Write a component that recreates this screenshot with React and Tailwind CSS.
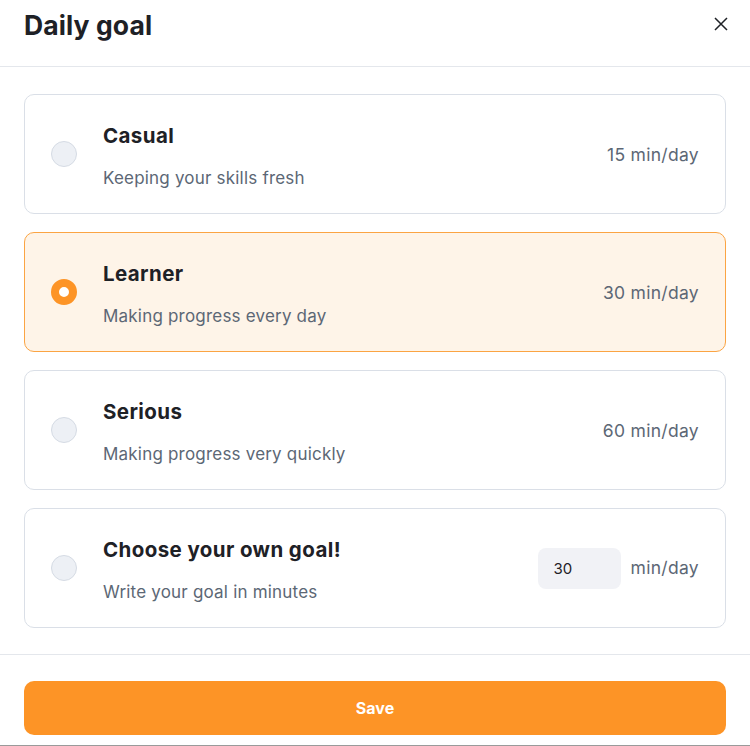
import React, { useState } from 'react';

const GOALS = [
  { id: 'casual', title: 'Casual', sub: 'Keeping your skills fresh', mins: 15 },
  { id: 'learner', title: 'Learner', sub: 'Making progress every day', mins: 30 },
  { id: 'serious', title: 'Serious', sub: 'Making progress very quickly', mins: 60 },
];

function Radio({ checked }) {
  return checked ? (
    <span className="w-[26px] h-[26px] shrink-0 rounded-full border-[8px] border-[#fd9426] bg-white" />
  ) : (
    <span className="w-[26px] h-[26px] shrink-0 rounded-full border border-[#d5dbe4] bg-[#edf0f5]" />
  );
}

export default function App() {
  const [selected, setSelected] = useState('learner');
  const [custom, setCustom] = useState('30');

  const card = (active) =>
    active
      ? 'border-[#fba443] bg-[#fef4e8]'
      : 'border-[#dadfe7] bg-white';

  return (
    <div
      className="w-[750px] h-[746px] bg-white flex flex-col border-b border-[#9a9a9a]"
      style={{ fontFamily: 'Inter, "Noto Sans", sans-serif' }}
    >
      {/* Header */}
      <div className="h-[67px] shrink-0 border-b border-[#e4e7ec] flex items-start justify-between pl-6 pr-[22px] pt-[7px]">
        <h1 className="text-[26.5px] font-bold text-[#1e2126] tracking-[0.1px] leading-9">Daily goal</h1>
        <button className="mt-[10px] text-[#1e2126]">
          <svg width="14" height="14" viewBox="0 0 14 14" fill="none" stroke="currentColor" strokeWidth="1.5">
            <path d="M1 1L13 13M13 1L1 13" />
          </svg>
        </button>
      </div>

      {/* Options */}
      <div className="flex flex-col gap-[18px] px-6 pt-[27px] pb-[26px] border-b border-[#e4e7ec]">
        {GOALS.map((g) => (
          <button
            key={g.id}
            onClick={() => setSelected(g.id)}
            className={`h-[120px] rounded-[10px] border flex items-center pl-[26px] pr-[26px] text-left ${card(selected === g.id)}`}
          >
            <Radio checked={selected === g.id} />
            <div className="ml-[26px] flex-1 flex flex-col gap-[18px] pt-[6px]">
              <span className="text-[20.5px] font-bold text-[#1e2126] leading-6 tracking-[0.4px]">{g.title}</span>
              <span className="text-[17px] text-[#5c6775] leading-6 tracking-[0.2px]">{g.sub}</span>
            </div>
            <span className="text-[17.5px] text-[#5c6775] tracking-[0.3px] pt-[2px]">{g.mins} min/day</span>
          </button>
        ))}

        <div
          onClick={() => setSelected('custom')}
          className={`h-[120px] rounded-[10px] border flex items-center pl-[26px] pr-[26px] ${card(selected === 'custom')}`}
        >
          <Radio checked={selected === 'custom'} />
          <div className="ml-[26px] flex-1 flex flex-col gap-[18px] pt-[6px]">
            <span className="text-[20.5px] font-bold text-[#1e2126] leading-6 tracking-[0.4px]">Choose your own goal!</span>
            <span className="text-[17px] text-[#5c6775] leading-6 tracking-[0.2px]">Write your goal in minutes</span>
          </div>
          <input
            value={custom}
            onChange={(e) => setCustom(e.target.value)}
            className="w-[83px] h-[41px] rounded-lg bg-[#f1f2f6] px-4 text-[15px] text-[#1e2126] outline-none"
          />
          <span className="ml-[10px] text-[17.5px] text-[#5c6775] tracking-[0.3px]">min/day</span>
        </div>
      </div>

      {/* Footer */}
      <div className="px-6 pt-[26px]">
        <button className="w-full h-[54px] rounded-[10px] bg-[#fd9426] text-white text-[16px] font-bold">
          Save
        </button>
      </div>
    </div>
  );
}
